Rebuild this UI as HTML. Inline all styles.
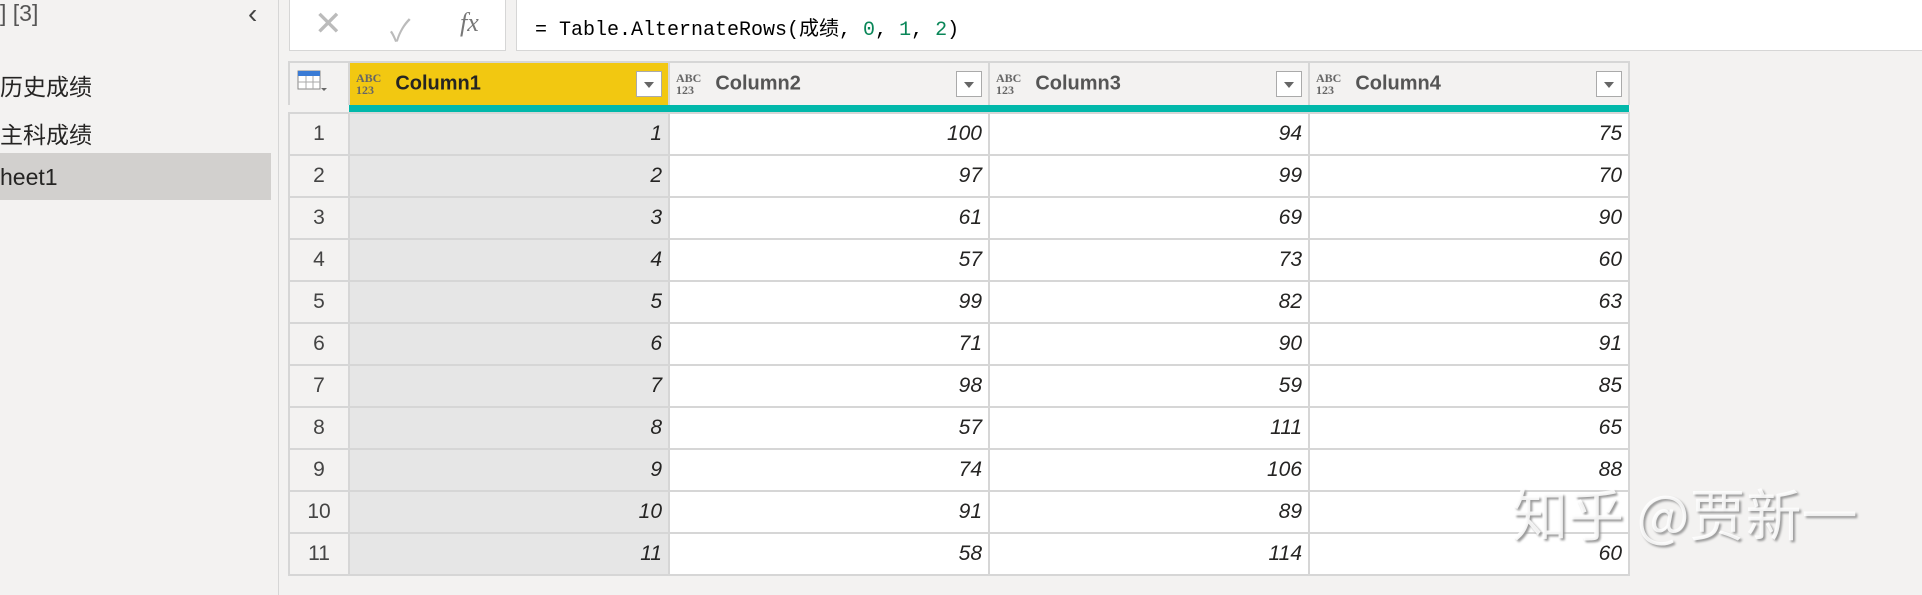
<!DOCTYPE html>
<html><head><meta charset="utf-8"><style>
body{margin:0;width:1922px;height:595px;background:#f3f2f1;position:relative;overflow:hidden;font-family:"Liberation Sans","Noto Sans CJK SC",sans-serif}
.lp{position:absolute;left:0;top:0;width:278px;height:595px;background:#f3f2f1;border-right:1px solid #d6d6d6}
.lp div{position:absolute;left:0;font-size:23px;color:#252423}
.sel{position:absolute;left:0;top:153px;width:271px;height:47px;background:#d2d0ce}
.fb{position:absolute;top:0;height:51px;background:#fff;border:1px solid #d6d6d6;border-top:none;box-sizing:border-box}
table{position:absolute;left:288px;top:61px;border-collapse:collapse;font-size:21px;color:#252423}
td{border:2px solid #d6d6d6;height:40px;padding:0 6px;text-align:right;font-style:italic;background:#fff}
td.n{font-style:normal;text-align:center;color:#444;background:#f3f2f1;width:46px}
td.c1{background:#e6e6e6}
th{height:42px;border:2px solid #d6d6d6;border-bottom:none;background:#f3f2f1;text-align:left;font-size:20px;color:#555;padding:0 6px;position:relative}
th.y{background:#f2c811;color:#252423}
.t{display:inline-block;font-size:12px;line-height:12px;vertical-align:middle;margin-right:14px;color:#666;font-family:"Liberation Serif",serif}
.dd{position:absolute;right:6px;top:8px;width:26px;height:26px;border:1px solid #aaa;background:#fff;box-sizing:border-box}
.dd:after{content:"";position:absolute;left:7px;top:10px;border-left:5px solid transparent;border-right:5px solid transparent;border-top:6px solid #666}
tr.teal td{height:7px;padding:0;border:none;background:#01b8aa}
</style></head><body>
<div class="lp">
<div style="top:0px;color:#555">] [3]</div>
<div style="left:248px;top:-2px;font-size:28px;color:#444">‹</div>
<div class="sel"></div>
<div style="top:68px">历史成绩</div>
<div style="top:116px">主科成绩</div>
<div style="top:164px">heet1</div>
</div>
<div class="fb" style="left:289px;width:217px">
<span style="position:absolute;left:24px;top:4px;font-size:34px;color:#bbb">✕</span>
<span style="position:absolute;left:100px;top:6px;font-size:30px;color:#bbb">✓</span>
<span style="position:absolute;left:170px;top:8px;font-size:26px;color:#777;font-style:italic;font-family:'Liberation Serif',serif">fx</span>
</div>
<div class="fb" style="left:516px;width:1410px">
<span style="position:absolute;left:18px;top:12px;font-family:'Liberation Mono','Noto Sans CJK SC',monospace;font-size:20px;color:#000">= Table.AlternateRows(成绩, <span style="color:#098658">0</span>, <span style="color:#098658">1</span>, <span style="color:#098658">2</span>)</span>
</div>
<table>
<tr><th style="width:46px;padding:0"><svg width="40" height="30" viewBox="0 0 40 30"><rect x="8" y="5" width="22" height="18" fill="#fff" stroke="#888"/><rect x="8" y="5" width="22" height="5" fill="#3a7bd5"/><path d="M8 16h22M16 10v13M23 10v13" stroke="#aaa"/><path d="M31 22l3 3 3-3z" fill="#666"/></svg></th>
<th class="y" style="width:306px"><span class="t">ABC<br>123</span><b>Column1</b><span class="dd"></span></th>
<th style="width:306px"><span class="t">ABC<br>123</span><b>Column2</b><span class="dd"></span></th>
<th style="width:306px"><span class="t">ABC<br>123</span><b>Column3</b><span class="dd"></span></th>
<th style="width:306px"><span class="t">ABC<br>123</span><b>Column4</b><span class="dd"></span></th></tr>
<tr class="teal"><td style="background:#f3f2f1"></td><td></td><td></td><td></td><td></td></tr>
<tr><td class="n">1</td><td class="c1">1</td><td>100</td><td>94</td><td>75</td></tr>
<tr><td class="n">2</td><td class="c1">2</td><td>97</td><td>99</td><td>70</td></tr>
<tr><td class="n">3</td><td class="c1">3</td><td>61</td><td>69</td><td>90</td></tr>
<tr><td class="n">4</td><td class="c1">4</td><td>57</td><td>73</td><td>60</td></tr>
<tr><td class="n">5</td><td class="c1">5</td><td>99</td><td>82</td><td>63</td></tr>
<tr><td class="n">6</td><td class="c1">6</td><td>71</td><td>90</td><td>91</td></tr>
<tr><td class="n">7</td><td class="c1">7</td><td>98</td><td>59</td><td>85</td></tr>
<tr><td class="n">8</td><td class="c1">8</td><td>57</td><td>111</td><td>65</td></tr>
<tr><td class="n">9</td><td class="c1">9</td><td>74</td><td>106</td><td>88</td></tr>
<tr><td class="n">10</td><td class="c1">10</td><td>91</td><td>89</td><td></td></tr>
<tr><td class="n">11</td><td class="c1">11</td><td>58</td><td>114</td><td>60</td></tr>
</table>
<div style="position:absolute;left:1512px;top:472px;font-size:56px;color:rgba(255,255,255,0.85);text-shadow:2px 2px 2px #999;font-family:'Noto Sans CJK SC',sans-serif">知乎 @贾新一</div>
</body></html>
